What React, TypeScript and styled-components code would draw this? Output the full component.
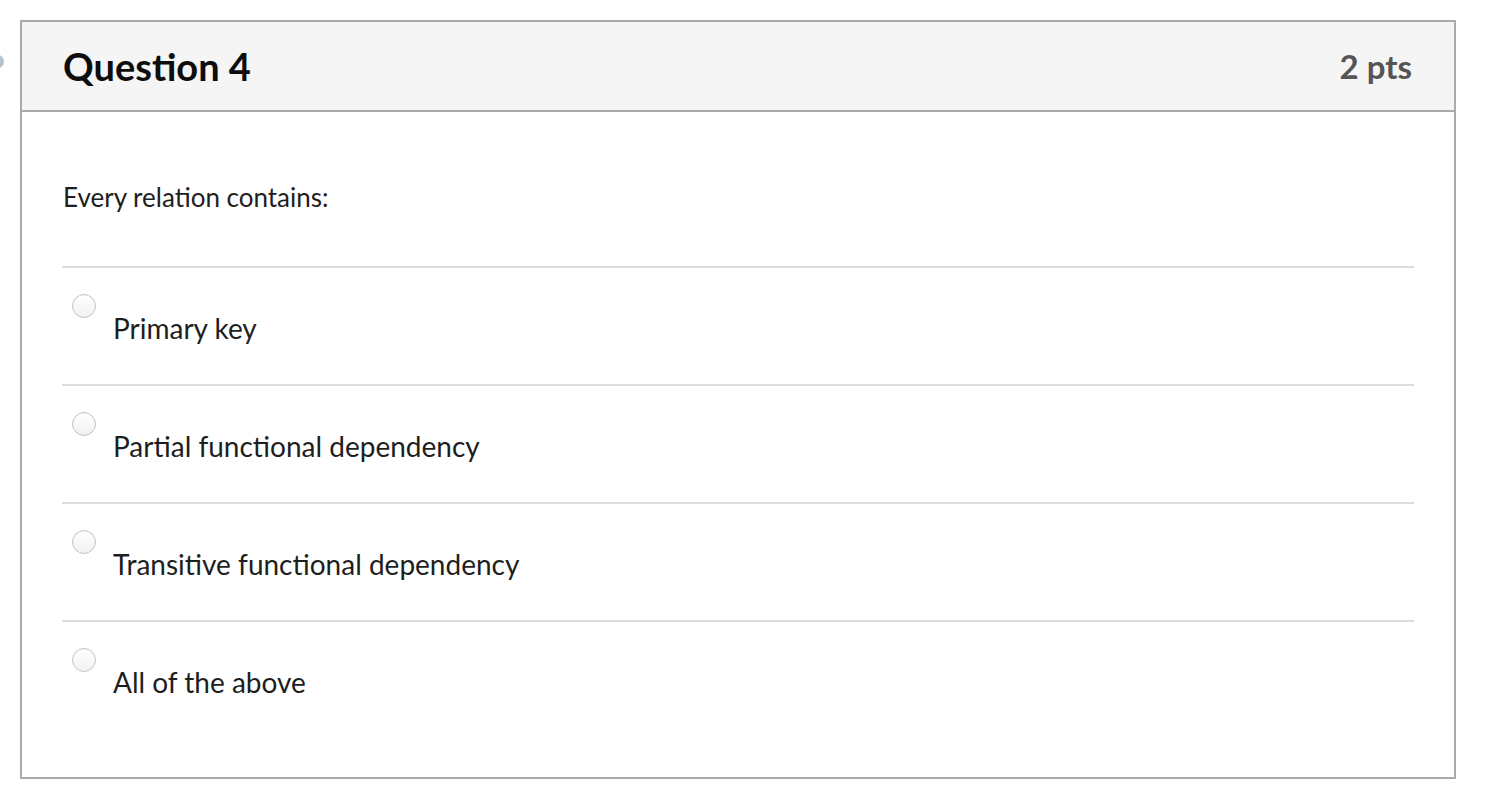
import React from "react";
import styled, { createGlobalStyle } from "styled-components";

const GlobalStyle = createGlobalStyle`
  html, body {
    margin: 0;
    padding: 0;
    background: #ffffff;
  }
  body {
    font-family: Lato, "Noto Sans", "Liberation Sans", sans-serif;
    color: #222222;
  }
`;

const Page = styled.div`
  position: relative;
  padding: 20px 30px 22px 20px;
  min-height: 802px;
  box-sizing: border-box;
`;

// the half hidden marker at the very left edge of the screen
const EdgeMarker = styled.span`
  position: absolute;
  left: -7px;
  top: 55px;
  width: 11px;
  height: 13px;
  border-radius: 50%;
  background: #b7c3cf;
  filter: blur(0.6px);
`;

const Card = styled.section`
  border: 2px solid #aaaaaa;
  background: #ffffff;
`;

const Header = styled.header`
  display: flex;
  align-items: center;
  justify-content: space-between;
  height: 88px;
  padding: 0 42px 0 41px;
  background: #f5f5f5;
  border-bottom: 2px solid #aaaaaa;
`;

const Title = styled.h2`
  margin: 0;
  font-size: 38px;
  font-weight: 700;
  color: #0d0d0d;
  line-height: 1;
`;

const Points = styled.span`
  font-size: 33px;
  font-weight: 700;
  color: #555555;
  line-height: 1;
`;

const Body = styled.div`
  padding: 67px 40px 39px 40px;
`;

const Prompt = styled.p`
  margin: 0 0 51px 1px;
  font-size: 26px;
  line-height: 36px;
  color: #1e1e1e;
`;

const Answers = styled.div`
  display: flex;
  flex-direction: column;
`;

const Answer = styled.label`
  display: flex;
  align-items: flex-start;
  height: 118px;
  box-sizing: border-box;
  padding: 26px 0 0 10px;
  border-top: 2px solid #dddddd;
  cursor: pointer;
`;

const Radio = styled.span`
  flex: none;
  width: 24px;
  height: 24px;
  box-sizing: border-box;
  border-radius: 50%;
  border: 1px solid #c4c4c4;
  background: linear-gradient(#ffffff, #f1f1f1);
  box-shadow: inset 0 1px 1px rgba(0, 0, 0, 0.04);
`;

const AnswerText = styled.span`
  margin: 16px 0 0 17px;
  font-size: 28px;
  line-height: 36px;
  color: #1e1e1e;
`;

const answers = [
  "Primary key",
  "Partial functional dependency",
  "Transitive functional dependency",
  "All of the above",
];

const App: React.FC = () => {
  return (
    <>
      <GlobalStyle />
      <Page>
        <EdgeMarker />
        <Card>
          <Header>
            <Title>Question 4</Title>
            <Points>2 pts</Points>
          </Header>
          <Body>
            <Prompt>Every relation contains:</Prompt>
            <Answers>
              {answers.map((text) => (
                <Answer key={text}>
                  <Radio />
                  <AnswerText>{text}</AnswerText>
                </Answer>
              ))}
            </Answers>
          </Body>
        </Card>
      </Page>
    </>
  );
};

export default App;
